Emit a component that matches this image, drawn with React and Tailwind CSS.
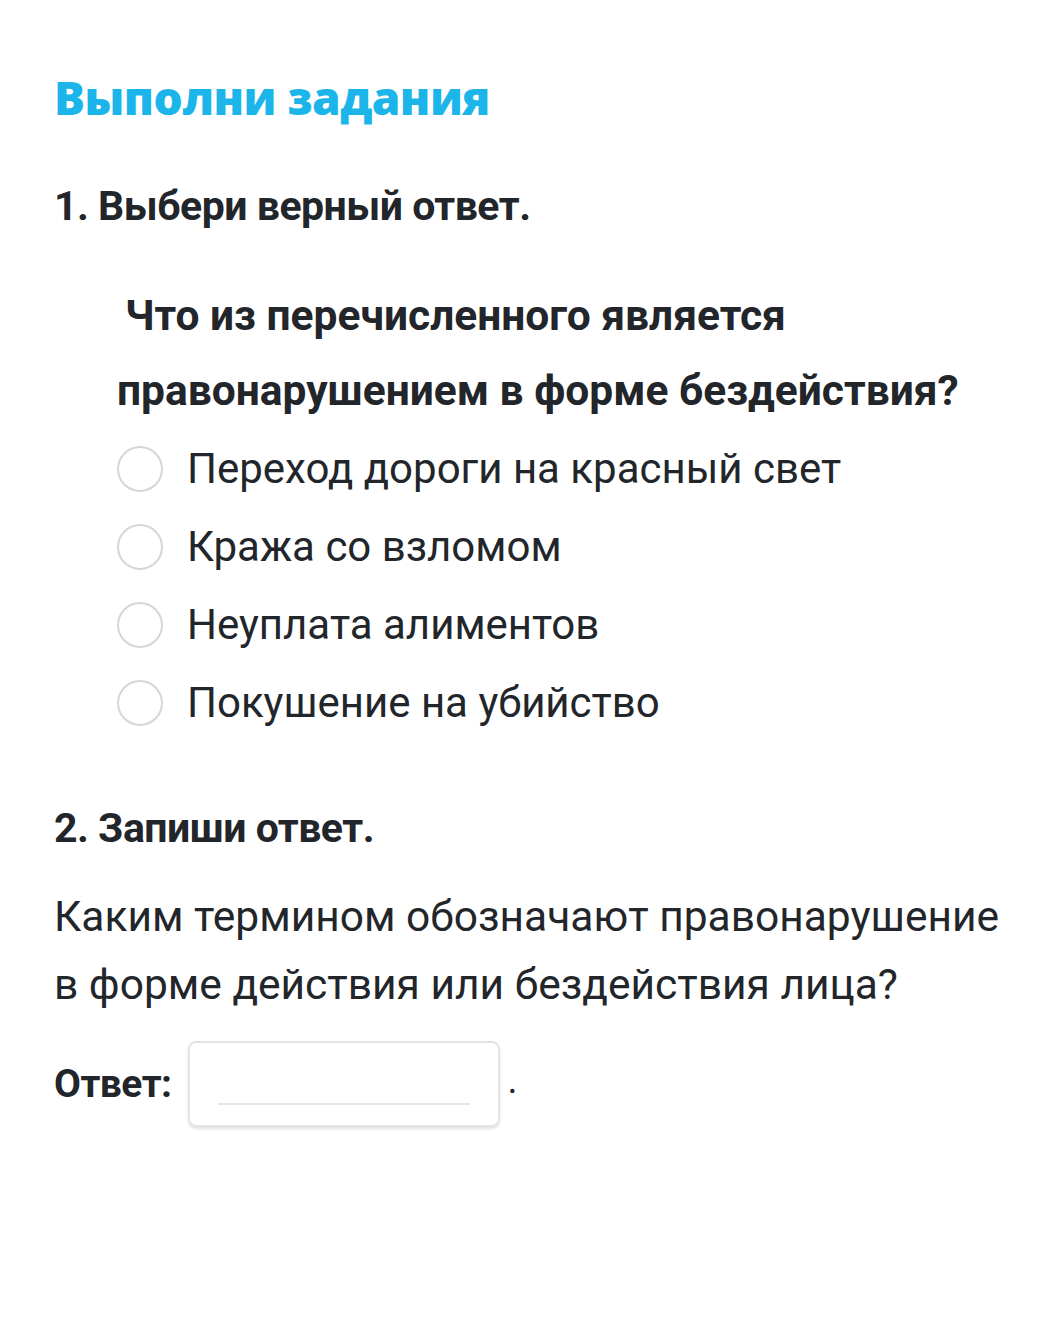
import React from "react";

const options = [
  "Переход дороги на красный свет",
  "Кража со взломом",
  "Неуплата алиментов",
  "Покушение на убийство",
];

export default function App() {
  return (
    <div
      className="w-[1056px] h-[1339px] bg-white text-[#22262b] pl-[54px] pt-[62px]"
      style={{ fontFamily: "Roboto, 'Noto Sans', sans-serif" }}
    >
      <h1
        className="h-[70px] flex items-center text-[46px] font-extrabold text-[#1cb5ea] tracking-[-0.5px]"
        style={{ fontFamily: "'Open Sans', Roboto, sans-serif" }}
      >
        Выполни задания
      </h1>
      <div className="h-[40px]" />
      <h2 className="h-[70px] flex items-center text-[41px] font-bold tracking-[-0.5px]">
        1. Выбери верный ответ.
      </h2>
      <div className="pl-[63px] mt-[36px]">
        <div className="h-[75px] flex items-center text-[42.5px] font-bold pl-[8px]">
          Что из перечисленного является
        </div>
        <div className="h-[75px] flex items-center text-[42.5px] font-bold">
          правонарушением в форме бездействия?
        </div>
        <div className="flex flex-col mt-[2px]">
          {options.map((o) => (
            <div key={o} className="h-[78px] flex items-center gap-[24px]">
              <span className="w-[46px] h-[46px] rounded-full border-[2px] border-[#d6d6d6] shrink-0" />
              <span className="text-[42px] leading-none">{o}</span>
            </div>
          ))}
        </div>
      </div>
      <h2 className="mt-[52px] h-[70px] flex items-center text-[41px] font-bold tracking-[-0.5px]">
        2. Запиши ответ.
      </h2>
      <div className="mt-[19px] text-[42.5px] leading-[68px]">
        <div>Каким термином обозначают правонарушение</div>
        <div>в форме действия или бездействия лица?</div>
      </div>
      <div className="mt-[22px] flex items-center">
        <span className="text-[39px] font-bold tracking-[-0.5px]">Ответ:</span>
        <div className="ml-[16px] w-[312px] h-[86px] rounded-[8px] border-[2px] border-[#e2e4df] shadow-[0_2px_3px_rgba(0,0,0,0.12)] flex items-end justify-center pb-[20px]">
          <div className="w-[252px] h-[2px] bg-[#e6e6e6]" />
        </div>
        <span className="ml-[8px] -mt-[8px] text-[38px]">.</span>
      </div>
    </div>
  );
}
